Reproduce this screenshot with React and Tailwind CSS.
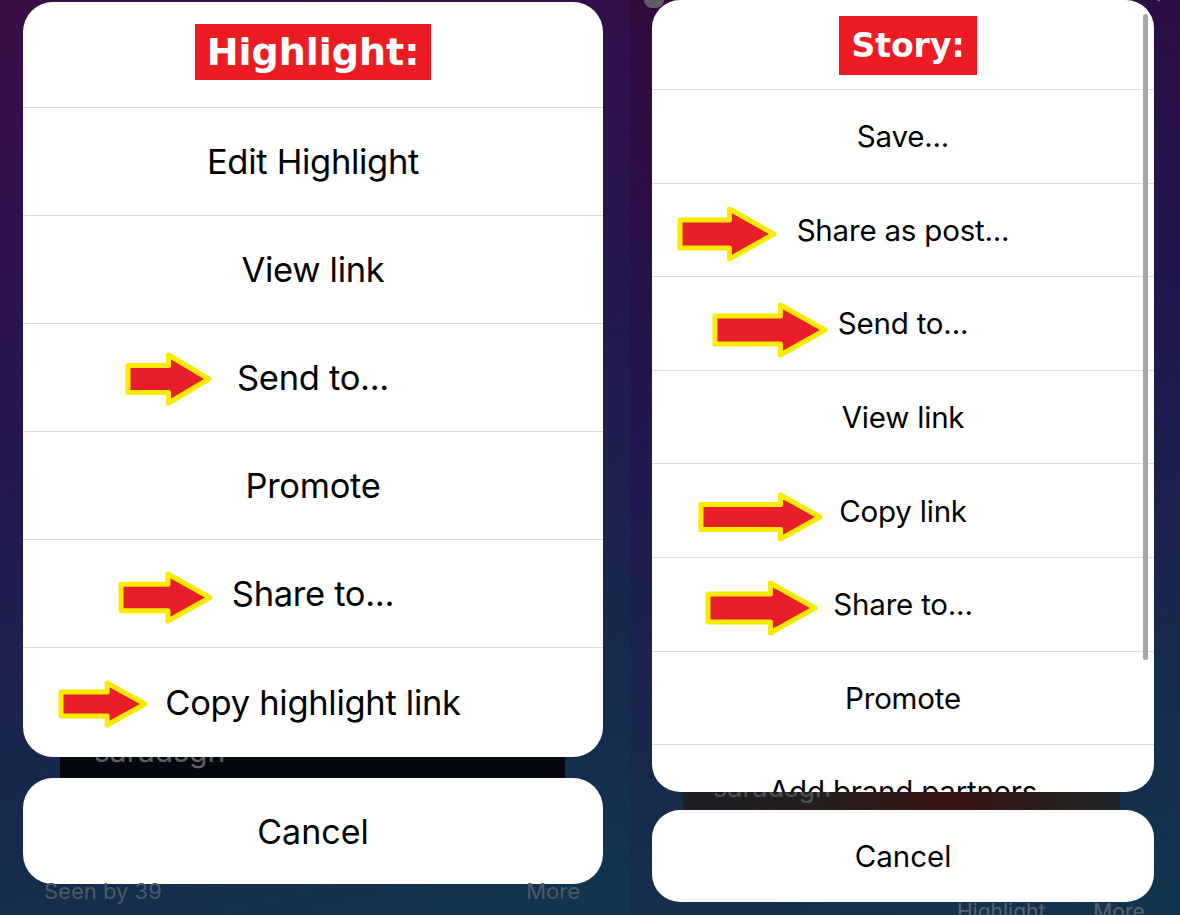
import React from "react";

function Arrow({ w, h, className }) {
  const s = 3;
  const head = Math.min(h * 0.85, w * 0.5);
  const y1 = h * 0.25;
  const y2 = h * 0.75;
  const pts = [
    [s, y1],
    [w - head, y1],
    [w - head, s],
    [w - s, h / 2],
    [w - head, h - s],
    [w - head, y2],
    [s, y2],
  ]
    .map((p) => p.join(","))
    .join(" ");
  return (
    <svg width={w} height={h} viewBox={`0 0 ${w} ${h}`} className={className}>
      <polygon points={pts} fill="#e81e2b" stroke="#f8ea00" strokeWidth="5" strokeLinejoin="round" />
    </svg>
  );
}

const font = { fontFamily: "Inter, 'Liberation Sans', sans-serif" };

function LeftRow({ children, arrow, last }) {
  return (
    <div className={`relative flex items-center justify-center shrink-0 ${last ? "h-[109px]" : "h-[108px] border-b border-[#dcdcdc]"}`}>
      {arrow}
      <span className="text-[34.5px] text-black tracking-[-0.3px]">{children}</span>
    </div>
  );
}

function RightRow({ children, arrow }) {
  return (
    <div className="relative flex items-center justify-center h-[93.6px] shrink-0 border-b border-[#dcdcdc]">
      {arrow}
      <span className="text-[29.5px] text-black tracking-[-0.2px]">{children}</span>
    </div>
  );
}

export default function App() {
  return (
    <div className="flex w-[1180px] h-[915px] overflow-hidden" style={font}>
      {/* LEFT */}
      <div className="w-[630px] h-[915px] flex flex-col pl-[23px] bg-[linear-gradient(165deg,#3b0d46_0%,#261650_40%,#17294c_75%,#113650_100%)]">
        <div className="mt-[2px] w-[580px] h-[755px] bg-white rounded-[30px] overflow-hidden flex flex-col shrink-0">
          <div className="h-[106px] flex justify-center pt-[22px] border-b border-[#dcdcdc] shrink-0">
            <div className="h-[56px] w-[236px] bg-[#ed1c24] flex items-center justify-center">
              <span className="text-white text-[38px] font-bold leading-none" style={{ fontFamily: "'DejaVu Sans', sans-serif" }}>
                Highlight:
              </span>
            </div>
          </div>
          <LeftRow>Edit Highlight</LeftRow>
          <LeftRow>View link</LeftRow>
          <LeftRow arrow={<Arrow w={87} h={54} className="absolute left-[102px] top-[28px]" />}>Send to...</LeftRow>
          <LeftRow>Promote</LeftRow>
          <LeftRow arrow={<Arrow w={95} h={53} className="absolute left-[95px] top-[31px]" />}>Share to...</LeftRow>
          <LeftRow last arrow={<Arrow w={90} h={48} className="absolute left-[35px] top-[32px]" />}>Copy highlight link</LeftRow>
        </div>
        <div className="ml-[37px] w-[505px] h-[21px] bg-[#05080e] overflow-hidden shrink-0">
          <div className="ml-[34px] -mt-[21px] text-[30px] text-[#5d6068] leading-none">saradsgn</div>
        </div>
        <div className="w-[580px] h-[106px] bg-white rounded-[30px] flex items-center justify-center shrink-0">
          <span className="text-[34px] text-black">Cancel</span>
        </div>
        <div className="flex justify-between w-[580px] pl-[21px] pr-[23px] mt-[-9px] shrink-0">
          <span className="text-[22px] text-[#4f5766]">Seen by 39</span>
          <span className="text-[22px] text-[#4f5766]">More</span>
        </div>
      </div>

      {/* RIGHT */}
      <div className="w-[550px] h-[915px] flex flex-col relative bg-[linear-gradient(165deg,#310a3d_0%,#221650_40%,#172a4d_75%,#12354f_100%)]">
        <div className="absolute left-[14px] top-[-8px] w-[20px] h-[16px] rounded-full bg-[#5d5d63]" />
        <div className="absolute left-[518px] top-[-6px] w-[14px] h-[3px] rotate-45 bg-[#8a8a8f]" />
        <div className="relative ml-[22px] w-[502px] h-[792px] bg-white rounded-[28px] overflow-hidden flex flex-col shrink-0">
          <div className="h-[90px] shrink-0 flex justify-center pt-[16px] pl-[10px] border-b border-[#dcdcdc]">
            <div className="h-[59px] w-[138px] bg-[#ed1c24] flex items-center justify-center">
              <span className="text-white text-[33px] font-bold leading-none" style={{ fontFamily: "'DejaVu Sans', sans-serif" }}>
                Story:
              </span>
            </div>
          </div>
          <RightRow>Save...</RightRow>
          <RightRow arrow={<Arrow w={100} h={56} className="absolute left-[25px] top-[22px]" />}>Share as post...</RightRow>
          <RightRow arrow={<Arrow w={116} h={56} className="absolute left-[60px] top-[25px]" />}>Send to...</RightRow>
          <RightRow>View link</RightRow>
          <RightRow arrow={<Arrow w={125} h={50} className="absolute left-[46px] top-[28px]" />}>Copy link</RightRow>
          <RightRow arrow={<Arrow w={113} h={56} className="absolute left-[53px] top-[22px]" />}>Share to...</RightRow>
          <RightRow>Promote</RightRow>
          <RightRow>Add brand partners</RightRow>
          <div className="absolute left-[491px] top-[14px] w-[5px] h-[646px] rounded-full bg-[#a8a8a8]" />
        </div>
        <div className="ml-[53px] w-[437px] h-[18px] shrink-0 bg-[linear-gradient(90deg,#1c1f24_0%,#2a1d1c_40%,#3a1410_60%,#1f2628_100%)] overflow-hidden">
          <div className="ml-[30px] -mt-[18px] text-[27px] text-[#4e5257] leading-none">saradsgn</div>
        </div>
        <div className="ml-[22px] w-[502px] h-[92px] bg-white rounded-[28px] flex items-center justify-center shrink-0">
          <span className="text-[29.5px] text-black">Cancel</span>
        </div>
        <div className="flex ml-[327px] mt-[-6px] gap-[48px] shrink-0">
          <span className="text-[21px] text-[#5a6170]">Highlight</span>
          <span className="text-[21px] text-[#5a6170]">More</span>
        </div>
      </div>
    </div>
  );
}
